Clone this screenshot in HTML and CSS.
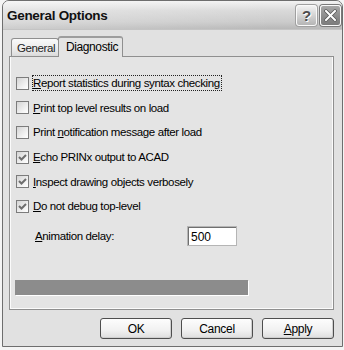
FILE: index.html
```html
<!DOCTYPE html>
<html>
<head>
<meta charset="utf-8">
<link rel="stylesheet" href="styles.css">
</head>
<body>
<div class="window">
  <div class="titlebar">
    <span class="title">General Options</span>
    <div class="caption">
      <div class="cbtn help">?</div>
      <div class="cbtn close">
        <svg width="13" height="13" viewBox="0 0 13 13"><path d="M2 2 L11 11 M11 2 L2 11" stroke="#555" stroke-width="3.4" stroke-linecap="square"/><path d="M2 2 L11 11 M11 2 L2 11" stroke="#fff" stroke-width="2" stroke-linecap="square"/></svg>
      </div>
    </div>
  </div>
  <div class="client">
    <div class="tabs">
      <div class="tab">General</div>
      <div class="tab active">Diagnostic</div>
    </div>
    <div class="panel">
      <div class="opts">
        <div class="row"><span class="cb"></span><span class="lbl focus"><u>R</u>eport statistics during syntax checking</span></div>
        <div class="row"><span class="cb"></span><span class="lbl"><u>P</u>rint top level results on load</span></div>
        <div class="row"><span class="cb"></span><span class="lbl">Print <u>n</u>otification message after load</span></div>
        <div class="row"><span class="cb on"><svg width="11" height="11" viewBox="0 0 11 11"><path d="M2 5 L4.5 7.5 L9 3" fill="none" stroke="#6e6e6e" stroke-width="2"/></svg></span><span class="lbl"><u>E</u>cho PRINx output to ACAD</span></div>
        <div class="row"><span class="cb on"><svg width="11" height="11" viewBox="0 0 11 11"><path d="M2 5 L4.5 7.5 L9 3" fill="none" stroke="#6e6e6e" stroke-width="2"/></svg></span><span class="lbl"><u>I</u>nspect drawing objects verbosely</span></div>
        <div class="row"><span class="cb on"><svg width="11" height="11" viewBox="0 0 11 11"><path d="M2 5 L4.5 7.5 L9 3" fill="none" stroke="#6e6e6e" stroke-width="2"/></svg></span><span class="lbl"><u>D</u>o not debug top-level</span></div>
      </div>
      <div class="delay">
        <span class="dlabel"><u>A</u>nimation delay:</span>
        <div class="field">500</div>
      </div>
      <div class="bar"></div>
    </div>
    <div class="buttons">
      <div class="btn">OK</div>
      <div class="btn">Cancel</div>
      <div class="btn"><u>A</u>pply</div>
    </div>
  </div>
</div>
</body>
</html>
```

FILE: styles.css
```css
* { box-sizing: border-box; }
body {
  margin: 0;
  background: #f4f4f4;
  font-family: "Liberation Sans", Arial, sans-serif;
  font-size: 11.5px;
  color: #000;
}
.window {
  margin-left: 2px;
  width: 341px;
  height: 347px;
  background: #e1e1e1;
  border: 1px solid #6e6e6e;
  border-radius: 7px 7px 0 0;
  overflow: hidden;
  display: flex;
  flex-direction: column;
}
.titlebar {
  height: 29px;
  flex: none;
  display: flex;
  align-items: center;
  justify-content: space-between;
  padding: 0 1px 0 4px;
  background:
    linear-gradient(to right, rgba(255,255,255,0.3), rgba(255,255,255,0) 80%),
    linear-gradient(#f3f3f3, #d9d9d9 35%, #cbcbcb 75%, #b8b8b8);
  border-bottom: 1px solid #c4c4c4;
}
.title {
  font-weight: bold;
  font-size: 13.5px;
  letter-spacing: -0.3px;
  color: #111;
  margin-top: 1px;
}
.caption { display: flex; gap: 3px; }
.cbtn {
  width: 21px;
  height: 21px;
  border: 1px solid #fafafa;
  border-radius: 3px;
  display: flex;
  align-items: center;
  justify-content: center;
}
.help {
  background: linear-gradient(#f2f2f2, #cdcdcd 60%, #b5b5b5);
  font-weight: bold;
  font-size: 15px;
  color: #4d4d4d;
  text-shadow: 1px 1px 0 #fff;
  box-shadow: 0 0 0 1px #a0a0a0;
}
.close {
  background: linear-gradient(#a8a8a8, #8a8a8a 60%, #7c7c7c);
  box-shadow: 0 0 0 1px #7a7a7a;
}
.client {
  flex: 1;
  padding: 6px 0 0 6px;
  display: flex;
  flex-direction: column;
}
.tabs {
  display: flex;
  align-items: flex-end;
  height: 20px;
  padding-left: 2px;
  position: relative;
  z-index: 1;
}
.tab {
  height: 18px;
  width: 48px;
  padding: 3px 0 0 5px;
  border: 1px solid #8f8f8f;
  border-bottom: none;
  border-radius: 3px 3px 0 0;
  background: linear-gradient(#fafafa, #e8e8e8 70%, #dadada);
  font-size: 11.5px;
  letter-spacing: -0.4px;
  color: #222;
}
.tab.active {
  height: 21px;
  width: 65px;
  margin-left: -1px;
  margin-bottom: -1px;
  padding: 2px 0 0 7px;
  background: #e4e4e4;
  border-top: 2px solid #9d9d9d;
  font-size: 12px;
  color: #000;
}
.panel {
  width: 325px;
  height: 254px;
  border: 1px solid #8f8f8f;
  background: #e4e4e4;
  box-shadow: inset -1px -1px 0 #fbfbfb, inset 1px 0 0 #fbfbfb;
  padding: 14px 0 0 6px;
}
.row {
  height: 24.6px;
  display: flex;
  align-items: center;
  gap: 4px;
}
.cb {
  width: 13px;
  height: 13px;
  border: 1px solid #7c7c7c;
  background: linear-gradient(135deg, #d4d4d4, #f4f4f4 70%, #ffffff);
  display: flex;
  align-items: center;
  justify-content: center;
}
.lbl {
  letter-spacing: -0.38px;
  padding: 1px 1px 1px 0;
}
.lbl.focus { outline: 1px dotted #222; outline-offset: 0; }
.delay {
  display: flex;
  align-items: center;
  margin-top: 7px;
  padding-left: 19px;
  height: 20px;
}
.dlabel {
  width: 152px;
  letter-spacing: -0.38px;
}
.field {
  width: 50px;
  height: 20px;
  background: #fff;
  border: 1px solid #b5b5b5;
  box-shadow: inset 1px 1px 0 #6f6f6f;
  padding: 3px 0 0 3px;
  font-size: 12px;
}
.bar {
  margin: 34px 0 0 -1px;
  width: 233px;
  height: 15px;
  background: #8c8c8c;
  box-shadow: 1px 1px 0 #fff;
}
.buttons {
  width: 325px;
  display: flex;
  justify-content: flex-end;
  gap: 9px;
  margin-top: 8px;
}
.btn {
  width: 72px;
  height: 21px;
  border: 1px solid #4e4e4e;
  border-radius: 3px;
  background: linear-gradient(#fdfdfd, #f1f1f1 60%, #dedede);
  box-shadow: inset -1px -1px 0 #cfcfcf;
  display: flex;
  align-items: center;
  justify-content: center;
  font-size: 12px;
  letter-spacing: -0.3px;
}
```
